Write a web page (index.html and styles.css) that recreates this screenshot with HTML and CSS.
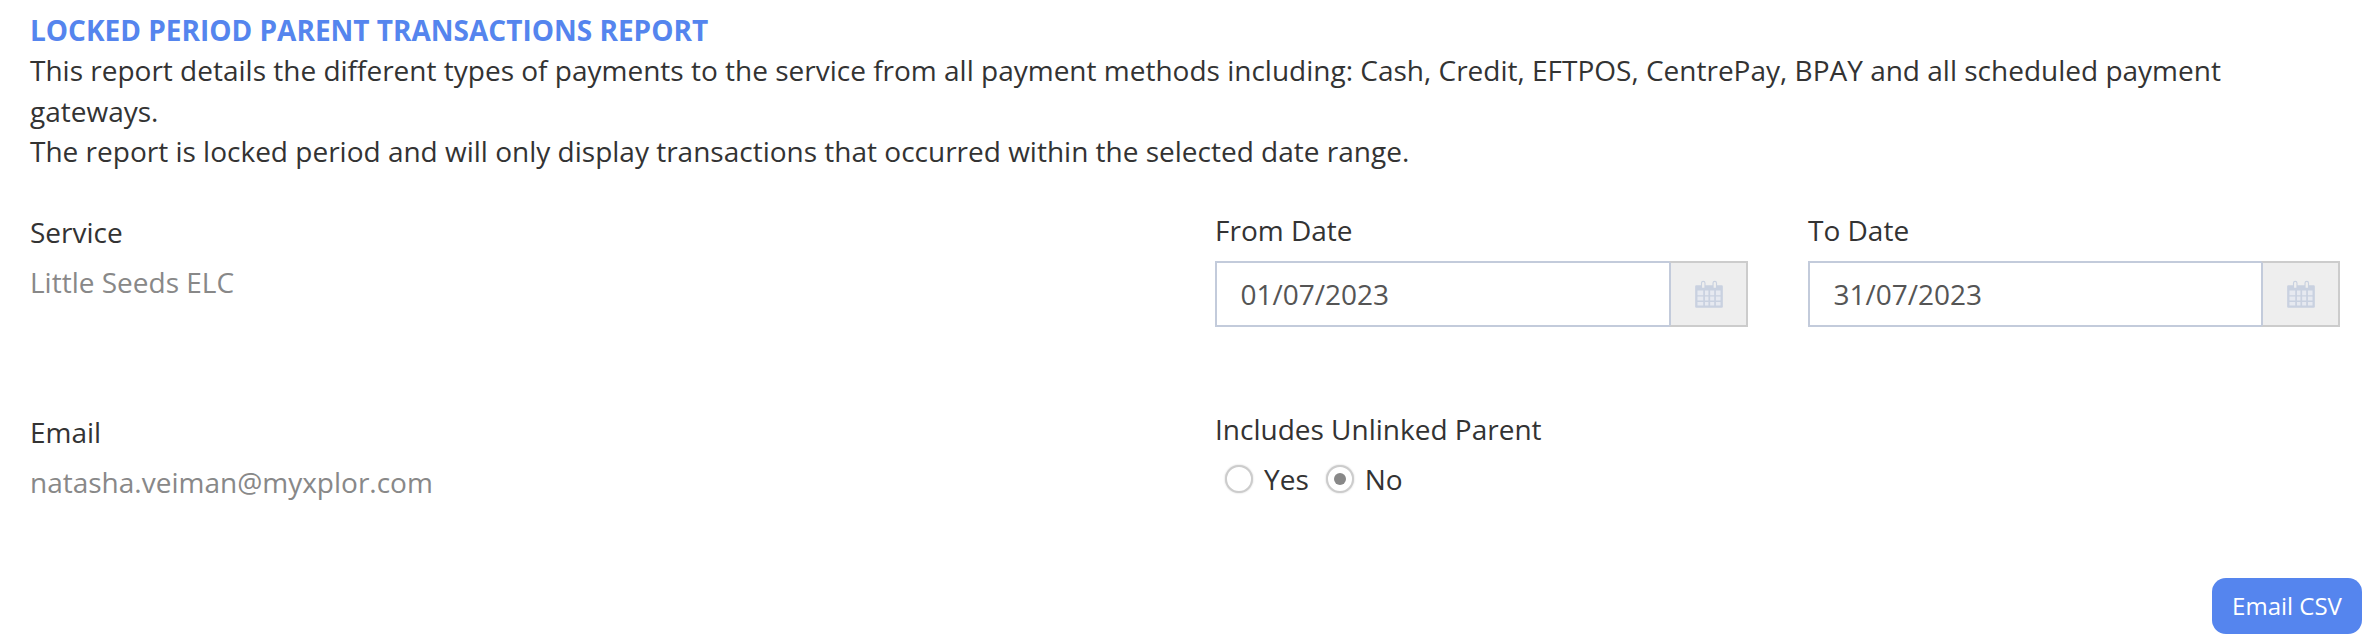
FILE: index.html
```html
<!DOCTYPE html>
<html lang="en">
<head>
<meta charset="utf-8">
<title>Locked Period Parent Transactions Report</title>
<link rel="stylesheet" href="styles.css">
</head>
<body>
<main class="report">
  <header class="intro">
    <h1 class="title">LOCKED PERIOD PARENT TRANSACTIONS REPORT</h1>
    <p class="desc">This report details the different types of payments to the service from all payment methods including: Cash, Credit, EFTPOS, CentrePay, BPAY and all scheduled payment gateways.<br>The report is locked period and will only display transactions that occurred within the selected date range.</p>
  </header>
  <section class="row row-dates">
    <div class="cell-wide">
      <div class="label">Service</div>
      <div class="value">Little Seeds ELC</div>
    </div>
    <div class="cell">
      <div class="label">From Date</div>
      <div class="date">
        <span class="date-text">01/07/2023</span>
        <span class="addon"><svg class="cal" viewBox="0 0 26 26"><path d="M2 5.5h4V3.5a2 2 0 0 1 4 0v2h6V3.5a2 2 0 0 1 4 0v2h4a1 1 0 0 1 1 1V24a1 1 0 0 1-1 1H2a1 1 0 0 1-1-1V6.500a1 1 0 0 1 1-1z" fill="#c9d1e0"/><path d="M7 3.500a1 1 0 0 1 2 0v4H7zM17 3.500a1 1 0 0 1 2 0v4h-2z" fill="#eee"/><path d="M3 10h5v4H3zM9.500 10h3v4h-3zM14 10h3.500v4H14zM19 10h4v4h-4zM3 15.200h5v3.500H3zM9.500 15.200h3v3.500h-3zM14 15.200h3.500v3.500H14zM19 15.200h4v3.500h-4zM3 20h5v3H3zM9.500 20h3v3h-3zM14 20h3.500v3H14zM19 20h4v3h-4z" fill="#e6e9f0"/></svg></span>
      </div>
    </div>
    <div class="cell">
      <div class="label">To Date</div>
      <div class="date">
        <span class="date-text">31/07/2023</span>
        <span class="addon"><svg class="cal" viewBox="0 0 26 26"><path d="M2 5.5h4V3.5a2 2 0 0 1 4 0v2h6V3.5a2 2 0 0 1 4 0v2h4a1 1 0 0 1 1 1V24a1 1 0 0 1-1 1H2a1 1 0 0 1-1-1V6.500a1 1 0 0 1 1-1z" fill="#c9d1e0"/><path d="M7 3.500a1 1 0 0 1 2 0v4H7zM17 3.500a1 1 0 0 1 2 0v4h-2z" fill="#eee"/><path d="M3 10h5v4H3zM9.500 10h3v4h-3zM14 10h3.500v4H14zM19 10h4v4h-4zM3 15.200h5v3.500H3zM9.500 15.200h3v3.500h-3zM14 15.200h3.500v3.500H14zM19 15.200h4v3.500h-4zM3 20h5v3H3zM9.500 20h3v3h-3zM14 20h3.500v3H14zM19 20h4v3h-4z" fill="#e6e9f0"/></svg></span>
      </div>
    </div>
  </section>
  <section class="row row-email">
    <div class="cell-wide">
      <div class="label">Email</div>
      <div class="value">natasha.veiman@myxplor.com</div>
    </div>
    <div class="cell">
      <div class="label">Includes Unlinked Parent</div>
      <div class="radios">
        <span class="radio"></span><span class="radio-label">Yes</span>
        <span class="radio radio-on"></span><span class="radio-label">No</span>
      </div>
    </div>
  </section>
  <footer class="actions"><button class="btn" type="button">Email CSV</button></footer>
</main>
</body>
</html>
```
FILE: styles.css
```css
html, body { margin: 0; padding: 0; background: #fff; }
body { width: 2378px; height: 642px; overflow: hidden; font-family: "Open Sans", sans-serif; color: #333; font-size: 28px; }
.report { padding: 10px 16px 0 30px; }
.title { margin: 0; font-size: 28px; line-height: 40px; font-weight: 700; color: #5585ee; }
.desc { margin: 0; max-width: 2280px; font-size: 28px; line-height: 40.5px; color: #333; }
.row { display: grid; grid-template-columns: 1185px 593px 532px; }
.row-dates { margin-top: 38px; height: 199px; }
.label { line-height: 40px; }
.value { color: #888; line-height: 40px; margin-top: 10px; }
.cell-wide { padding-top: 2px; }
.row-email .cell-wide { padding-top: 3px; }
.date { display: flex; width: 100%; max-width: 533px; height: 66px; box-sizing: border-box; margin-top: 11px; border: 2px solid #c3cbdb; }
.date-text { flex: 1; padding-left: 23.5px; line-height: 62px; color: #555; }
.addon { width: 75px; background: #eee; border-left: 2px solid #c3cbdb; margin: -2px -2px -2px 0; border-top: 2px solid #ccc; border-right: 2px solid #ccc; border-bottom: 2px solid #ccc; display: flex; align-items: center; justify-content: center; }
.cal { width: 30px; height: 30px; }
.radios { display: flex; align-items: center; margin-top: 10px; padding-left: 10px; height: 40px; }
.radio { width: 28px; height: 28px; border-radius: 50%; border: 2px solid #ccc; box-shadow: 0 0 2px #ccc; box-sizing: border-box; background: #fff; flex: none; display: flex; align-items: center; justify-content: center; }
.radio-on::after { content: ""; width: 12px; height: 12px; border-radius: 50%; background: #888; }
.radio-label { margin: 0 17px 0 11px; }
.actions { display: flex; justify-content: flex-end; margin-top: 76px; }
.btn { width: 150px; height: 56px; padding: 0; border: 0; border-radius: 14px; background: #5585ee; color: #fff; font: 24px "Open Sans", sans-serif; }
```
